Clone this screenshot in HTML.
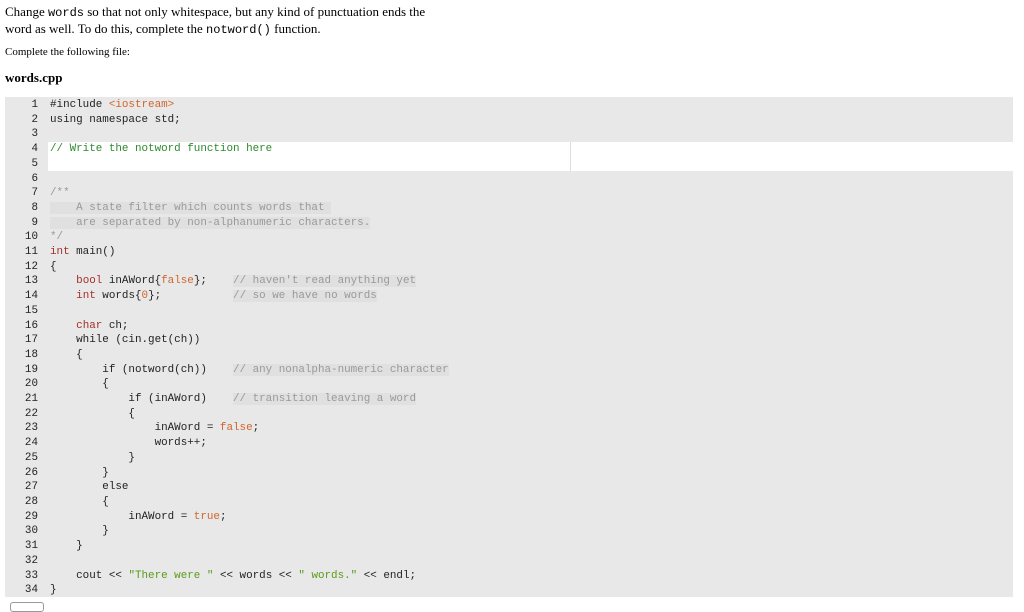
<!DOCTYPE html>
<html><head><style>
body{margin:0;background:#fff;font-family:"Liberation Serif",serif;color:#000;}
.p1{position:absolute;left:5px;top:4px;font-size:13px;line-height:16px;width:432px}
.p1 code{font-family:"Liberation Mono",monospace;font-size:12px}
.p2{position:absolute;left:5px;top:46px;font-size:11px}
.p3{position:absolute;left:5px;top:70px;font-size:13px;font-weight:bold}
.box{position:absolute;left:5px;top:97px;width:1008px;height:500px;background:#e8e8e8}
.white{position:absolute;left:48px;top:142px;width:965px;height:29px;background:#fff}
.vl{position:absolute;left:570px;top:142px;width:1px;height:29px;background:#ddd}
pre{margin:0;position:absolute;top:98px;font-family:"Liberation Mono",monospace;font-size:10.9px;line-height:14.7px;color:#222}
.ln{left:5px;width:33px;text-align:right}
.code{left:50px}
.k{color:#a3302a}.s{color:#d0652b}.c{color:#2c8a2c}.g{color:#999}.cb{color:#999;background:#e0e0e0}.q{color:#5a9a1a}
.btn{position:absolute;left:10px;top:602px;width:32px;height:8px;border:1px solid #999;border-radius:3px}
</style></head><body>
<div class="p1">Change <code>words</code> so that not only whitespace, but any kind of punctuation ends the word as well. To do this, complete the <code>notword()</code> function.</div>
<div class="p2">Complete the following file:</div>
<div class="p3">words.cpp</div>
<div class="box"></div>
<div class="white"></div><div class="vl"></div>
<pre class="ln">1
2
3
4
5
6
7
8
9
10
11
12
13
14
15
16
17
18
19
20
21
22
23
24
25
26
27
28
29
30
31
32
33
34</pre>
<pre class="code">#include <span class="s">&lt;iostream&gt;</span>
using namespace std;

<span class="c">// Write the notword function here</span>


<span class="g">/**</span>
<span class="cb">    A state filter which counts words that </span>
<span class="cb">    are separated by non-alphanumeric characters.</span>
<span class="g">*/</span>
<span class="k">int</span> main()
{
    <span class="k">bool</span> inAWord{<span class="s">false</span>};    <span class="cb">// haven't read anything yet</span>
    <span class="k">int</span> words{<span class="s">0</span>};           <span class="cb">// so we have no words</span>

    <span class="k">char</span> ch;
    while (cin.get(ch))
    {
        if (notword(ch))    <span class="cb">// any nonalpha-numeric character</span>
        {
            if (inAWord)    <span class="cb">// transition leaving a word</span>
            {
                inAWord = <span class="s">false</span>;
                words++;
            }
        }
        else
        {
            inAWord = <span class="s">true</span>;
        }
    }

    cout &lt;&lt; <span class="q">"There were "</span> &lt;&lt; words &lt;&lt; <span class="q">" words."</span> &lt;&lt; endl;
}</pre>
<div class="btn"></div>
</body></html>
